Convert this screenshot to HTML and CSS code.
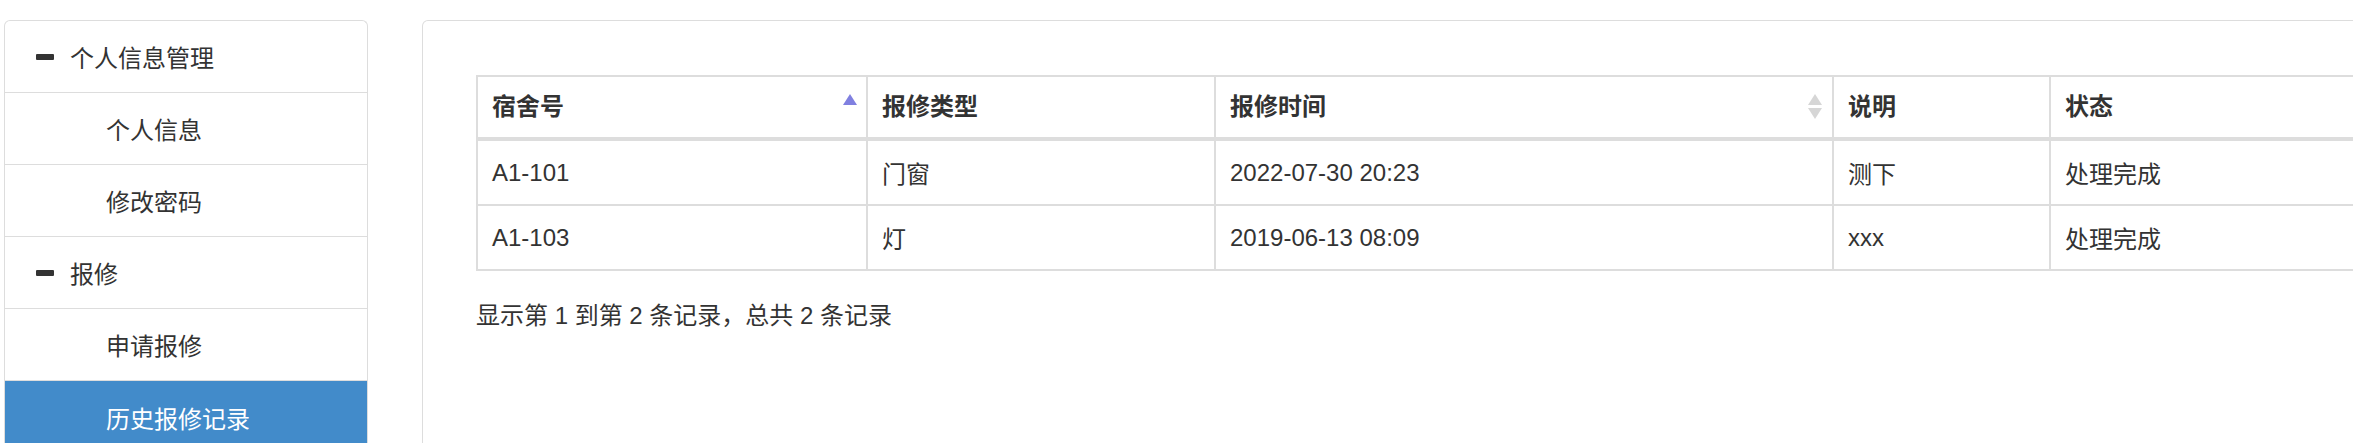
FILE: index.html
```html
<!DOCTYPE html>
<html>

<head>
	<meta charset="utf-8">
	<title>历史报修记录</title>
	<link rel="stylesheet" href="styles.css">
</head>

<body>
	<div class="page">
		<!-- left menu -->
		<div class="sidebar">
			<div class="menu-item group"><span class="minus"></span>个人信息管理</div>
			<div class="menu-item sub">个人信息</div>
			<div class="menu-item sub">修改密码</div>
			<div class="menu-item group"><span class="minus"></span>报修</div>
			<div class="menu-item sub">申请报修</div>
			<div class="menu-item sub active">历史报修记录</div>
		</div>

		<!-- records table -->
		<div class="content">
			<table class="records">
				<colgroup>
					<col class="col-room">
					<col class="col-type">
					<col class="col-time">
					<col class="col-note">
					<col>
				</colgroup>
				<thead>
					<tr>
						<th><div class="th-inner">宿舍号<span class="sort asc"></span></div></th>
						<th><div class="th-inner">报修类型</div></th>
						<th><div class="th-inner">报修时间<span class="sort both"></span></div></th>
						<th><div class="th-inner">说明</div></th>
						<th><div class="th-inner">状态</div></th>
					</tr>
				</thead>
				<tbody>
					<tr>
						<td>A1-101</td>
						<td>门窗</td>
						<td>2022-07-30 20:23</td>
						<td>测下</td>
						<td>处理完成</td>
					</tr>
					<tr>
						<td>A1-103</td>
						<td>灯</td>
						<td>2019-06-13 08:09</td>
						<td>xxx</td>
						<td>处理完成</td>
					</tr>
				</tbody>
			</table>
			<div class="pagination-info">显示第 1 到第 2 条记录，总共 2 条记录</div>
		</div>
	</div>
</body>

</html>
```

FILE: styles.css
```css
body {
	margin: 0;
	padding: 0;
	height: 443px;
	overflow: hidden;
	background-color: #fff;
	color: #333;
	font-family: "Liberation Sans", Arial, "Noto Sans CJK SC", sans-serif;
	font-size: 24px;
}

.page {
	display: flex;
	gap: 54px;
	padding: 20px 0 0 4px;
	width: 2460px;
	height: 423px;
	overflow: hidden;
}

.sidebar {
	width: 364px;
	flex: none;
	box-sizing: border-box;
	border: 1px solid #ddd;
	border-bottom: none;
	border-radius: 6px 6px 0 0;
	overflow: hidden;
	height: 423px;
}

.menu-item {
	height: 71px;
	display: flex;
	align-items: center;
	border-bottom: 1px solid #ddd;
}

.menu-item.group {
	padding-left: 31px;
}

.menu-item.sub {
	padding-left: 101px;
}

.menu-item.active {
	background-color: #428bca;
	color: #fff;
	border-bottom: none;
	height: 72px;
}

/* glyph style minus icon */
.minus {
	display: inline-block;
	width: 18px;
	height: 6px;
	background-color: #333;
	border-radius: 1px;
	margin-right: 16px;
}

.content {
	width: 2000px;
	flex: none;
	box-sizing: border-box;
	border: 1px solid #ddd;
	border-bottom: none;
	border-radius: 6px 6px 0 0;
	padding: 54px 53px 0 53px;
	height: 423px;
}

.records {
	border-collapse: collapse;
	table-layout: fixed;
	width: 100%;
	border: 2px solid #ddd;
}

.col-room { width: 390px; }
.col-type { width: 348px; }
.col-time { width: 618px; }
.col-note { width: 217px; }

.records th,
.records td {
	border: 2px solid #ddd;
	text-align: left;
	padding: 0 14px;
	white-space: nowrap;
}

.records th {
	height: 60px;
	font-weight: bold;
	border-bottom-width: 4px;
	padding: 0;
}

.th-inner {
	position: relative;
	padding: 0 14px;
	line-height: 60px;
}

.records td {
	height: 63px;
}

/* sort arrows */
.sort {
	position: absolute;
	right: 8px;
	top: 17px;
	width: 16px;
	height: 26px;
}

.sort.asc::before,
.sort.both::before,
.sort.both::after {
	content: "";
	position: absolute;
	left: 1px;
	border-left: 7px solid transparent;
	border-right: 7px solid transparent;
}

.sort.asc::before {
	top: 0;
	border-bottom: 11px solid #8080e0;
}

.sort.both {
	right: 9px;
}

.sort.both::before {
	top: 0;
	border-bottom: 11px solid #d6d6d6;
}

.sort.both::after {
	top: 14px;
	border-top: 11px solid #d6d6d6;
}

.pagination-info {
	margin-top: 30px;
	line-height: 30px;
}
```
